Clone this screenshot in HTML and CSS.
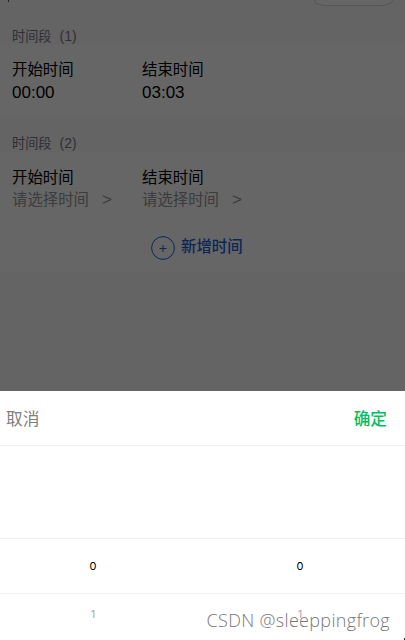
FILE: index.html
```
<!DOCTYPE html>
<html lang="zh-CN">
<head>
    <meta charset="UTF-8">
    <meta name="viewport" content="width=device-width, initial-scale=1.0">
    <title>时间段</title>
    <link rel="stylesheet" href="styles.css">
</head>
<body>
    <div class="page">
        <div class="top-row">
            <span class="top-mark"></span>
            <span class="top-button"></span>
        </div>

        <div class="section-title">时间段<span class="num">(1)</span></div>
        <div class="card">
            <div class="times">
                <div class="time-item">
                    <div class="label">开始时间</div>
                    <div class="value">00:00</div>
                </div>
                <div class="time-item">
                    <div class="label">结束时间</div>
                    <div class="value">03:03</div>
                </div>
            </div>
        </div>

        <div class="section-title second">时间段<span class="num">(2)</span></div>
        <div class="card card-add">
            <div class="times">
                <div class="time-item">
                    <div class="label">开始时间</div>
                    <div class="value empty">请选择时间<span class="arrow">&gt;</span></div>
                </div>
                <div class="time-item">
                    <div class="label">结束时间</div>
                    <div class="value empty">请选择时间<span class="arrow">&gt;</span></div>
                </div>
            </div>
            <div class="add">
                <svg class="add-icon" width="24" height="24" viewBox="0 0 24 24" fill="none" stroke="currentColor">
                    <circle cx="12" cy="12" r="11.4"/>
                    <path d="M8.5 12.5h7M12 9v7"/>
                </svg>
                <span>新增时间</span>
            </div>
        </div>
    </div>

    <div class="mask"></div>

    <div class="picker">
        <div class="picker-header">
            <span class="cancel">取消</span>
            <span class="confirm">确定</span>
        </div>
        <div class="picker-body">
            <div class="row blank"></div>
            <div class="row selected"><span>0</span><span>0</span></div>
            <div class="row next"><span>1</span><span>1</span></div>
        </div>
    </div>

    <div class="watermark">CSDN @sleeppingfrog</div>
    <div class="corner"></div>

</body>
</html>
```

FILE: styles.css
```
* {
    box-sizing: border-box;
}

body {
    margin: 0;
    height: 640px;
    overflow: hidden;
    position: relative;
    background-color: #fafafa;
    color: #000;
    font-family: "Liberation Sans", "Noto Sans CJK SC", sans-serif;
}

.top-row {
    display: flex;
    justify-content: space-between;
    height: 27px;
    padding: 0 12px 0 8px;
}

.top-mark {
    width: 1px;
    height: 2px;
    background-color: #555;
}

.top-button {
    width: 79px;
    height: 6px;
    border: 1px solid #d8d8d8;
    border-top: none;
    border-radius: 0 0 12px 12px / 0 0 6px 6px;
    background-color: #fff;
}

.section-title {
    height: 18px;
    padding-left: 12px;
    font-size: 13.2px;
    line-height: 18px;
    color: #777785;
}

.section-title.second {
    height: 36px;
    padding-top: 18px;
}

.num {
    margin-left: 8px;
    font-size: 14px;
}

.card {
    height: 71px;
    padding: 14px 12px 0;
    background-color: #fff;
}

.card-add {
    height: 120px;
    padding-top: 15px;
}

.times {
    display: flex;
}

.time-item {
    width: 130px;
}

.label {
    font-size: 15.4px;
    line-height: 22px;
}

.value {
    font-size: 17px;
    line-height: 24px;
}

.value.empty {
    font-size: 15.4px;
    line-height: 22px;
    color: #96969c;
}

.arrow {
    margin-left: 13px;
    font-size: 17px;
}

.add {
    display: flex;
    align-items: center;
    gap: 6px;
    height: 24px;
    margin: 25px 0 0 139px;
    font-size: 15.4px;
    line-height: 22px;
    color: #1c60d8;
}

.add-icon {
    flex-shrink: 0;
}

.add span {
    margin-top: -3px;
    font-weight: 500;
}

.mask {
    position: absolute;
    inset: 0;
    background-color: rgba(0, 0, 0, 0.6);
}

.picker {
    position: absolute;
    left: 0;
    right: 0;
    bottom: 0;
    height: 249px;
    overflow: hidden;
    background-color: #fff;
}

.picker-header {
    display: flex;
    justify-content: space-between;
    height: 55px;
    padding: 0 18px 0 6px;
    border-bottom: 1px solid #f0f0f0;
    font-size: 16.7px;
    line-height: 57px;
}

.cancel {
    color: #808080;
}

.confirm {
    color: #07bd61;
    font-weight: 500;
}

.row {
    display: flex;
    height: 55px;
    padding-left: 83px;
    font-family: Inter, "Liberation Sans", sans-serif;
    font-size: 11px;
    line-height: 55px;
}

.row span {
    width: 20px;
    margin-right: 187px;
    flex-shrink: 0;
    text-align: center;
}

.row.blank {
    height: 92px;
}

.row.selected {
    height: 56px;
    border-top: 1px solid #f0f0f0;
    border-bottom: 1px solid #f0f0f0;
}

.row.next {
    color: #aaa;
    line-height: 40px;
}

/* watermark lies over the picker */
.watermark {
    position: absolute;
    right: 15px;
    bottom: 8px;
    font-family: "Open Sans", "Liberation Sans", sans-serif;
    font-size: 18px;
    font-weight: 300;
    letter-spacing: 0.32px;
    line-height: 24px;
    white-space: nowrap;
    color: #777;
}

.corner {
    position: absolute;
    right: 0;
    bottom: 0;
    width: 1px;
    height: 2px;
    background-color: #333;
}
```
